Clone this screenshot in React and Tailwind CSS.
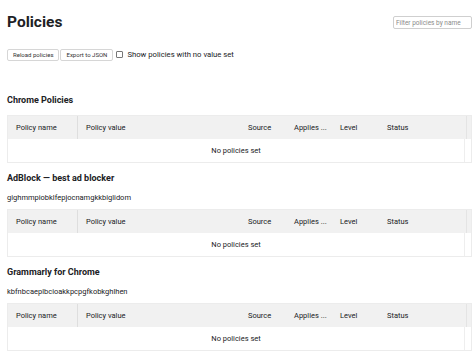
import React from "react";

const columns = [
  { key: "name", label: "Policy name" },
  { key: "value", label: "Policy value" },
  { key: "source", label: "Source" },
  { key: "scope", label: "Applies ..." },
  { key: "level", label: "Level" },
  { key: "status", label: "Status" },
];

const sections = [
  { title: "AdBlock — best ad blocker", id: "gighmmpiobklfepjocnamgkkbiglidom" },
  { title: "Grammarly for Chrome", id: "kbfnbcaeplbcioakkpcpgfkobkghlhen" },
];

function PolicyTable() {
  return (
    <div className="border border-[#ececec] text-[7.5px] text-[#202124]">
      <div className="grid h-[23px] grid-cols-[70px_162px_46px_46px_47px_87px_1fr] items-center bg-[#f1f1f1]">
        {columns.map((col, i) => (
          <div
            key={col.key}
            className={
              i === 0
                ? "flex h-full items-center border-r border-[#dedede] pl-2"
                : "pl-2"
            }
          >
            {col.label}
          </div>
        ))}
        <div className="h-full border-l border-[#e4e4e4]" />
      </div>
      <div className="grid h-[23px] grid-cols-[1fr_7px] items-center bg-white">
        <div className="text-center">No policies set</div>
        <div className="h-full border-l border-[#eeeeee]" />
      </div>
    </div>
  );
}

export default function App() {
  return (
    <div
      className="min-h-[357px] bg-white pl-[7px] pr-[2px] text-[#202124]"
      style={{ fontFamily: "Roboto, 'Liberation Sans', sans-serif" }}
    >
      {/* header */}
      <div className="flex items-center justify-between pt-[12px]">
        <h1 className="text-[15.5px] font-bold leading-[20px]">Policies</h1>
        <input
          placeholder="Filter policies by name"
          className="mt-[1px] h-[13px] w-[79px] rounded-[2px] border border-[#cfcfcf] px-[2px] text-[6.5px] text-[#202124] outline-none placeholder:text-[#8a8a8a]"
        />
      </div>

      {/* actions */}
      <div className="mt-[17px] flex items-center gap-[1px]">
        <button className="h-[12px] rounded-[2px] border border-[#d6d6d6] bg-white px-[5px] text-[6px] leading-none text-[#333]">
          Reload policies
        </button>
        <button className="h-[12px] rounded-[2px] border border-[#d6d6d6] bg-white px-[5px] text-[6px] leading-none text-[#333]">
          Export to JSON
        </button>
        <label className="ml-[2px] flex items-center gap-[4px] text-[7.7px]">
          <span className="inline-block h-[7px] w-[7px] rounded-[1px] border border-[#777]" />
          Show policies with no value set
        </label>
      </div>

      {/* chrome policies */}
      <h2 className="mt-[33px] text-[9px] font-bold leading-[12px]">
        Chrome Policies
      </h2>
      <div className="mt-[9px]">
        <PolicyTable />
      </div>

      {sections.map((s) => (
        <div key={s.id}>
          <h2 className="mt-[9px] text-[9px] font-bold leading-[12px]">
            {s.title}
          </h2>
          <p className="mt-[9px] text-[7.5px] leading-[10px]">{s.id}</p>
          <div className="mt-[6px]">
            <PolicyTable />
          </div>
        </div>
      ))}
    </div>
  );
}
